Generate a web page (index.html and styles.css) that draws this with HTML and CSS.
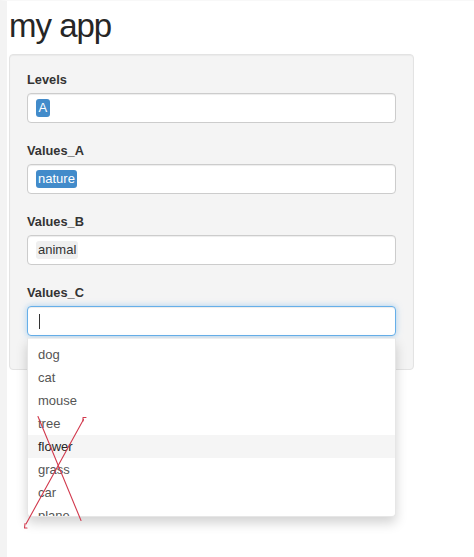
FILE: index.html
```html
<!DOCTYPE html>
<html>
<head>
<meta charset="utf-8">
<title>my app</title>
<link rel="stylesheet" href="styles.css">
</head>
<body>
<div class="page">
  <h1 class="title">my app</h1>
  <div class="well">
    <div class="group">
      <label class="label">Levels</label>
      <div class="control">
        <div class="input"><span class="pill pill-active pill-a">A</span></div>
      </div>
    </div>
    <div class="group">
      <label class="label">Values_A</label>
      <div class="control">
        <div class="input"><span class="pill pill-active">nature</span></div>
      </div>
    </div>
    <div class="group">
      <label class="label">Values_B</label>
      <div class="control">
        <div class="input"><span class="pill">animal</span></div>
      </div>
    </div>
    <div class="group">
      <label class="label">Values_C</label>
      <div class="control">
        <div class="input input-focus"><span class="caret"></span></div>
        <div class="dropdown">
          <div class="option">dog</div>
          <div class="option">cat</div>
          <div class="option">mouse</div>
          <div class="option">tree</div>
          <div class="option option-active">flower</div>
          <div class="option">grass</div>
          <div class="option">car</div>
          <div class="option">plane</div>
        </div>
      </div>
    </div>
  </div>
</div>
<svg class="marks" width="474" height="557" viewBox="0 0 474 557" xmlns="http://www.w3.org/2000/svg">
  <g fill="none" stroke="#d23a4e" stroke-width="1.1" stroke-linecap="round" stroke-linejoin="round">
    <path d="M38 416.5 L81 520.5"/>
    <path d="M83.5 419.5 L26 524"/>
    <path d="M83 421 L83 417.5 L86 417.5"/>
    <path d="M25 523.5 L24.5 528 L27 528"/>
  </g>
</svg>
</body>
</html>
```

FILE: styles.css
```css
html, body {
  margin: 0;
  padding: 0;
  background: #ffffff;
}

body {
  font-family: "Liberation Sans", Arial, sans-serif;
  font-size: 12.6px;
  color: #333333;
  position: relative;
  width: 474px;
  height: 557px;
  overflow: hidden;
}

.page {
  box-sizing: border-box;
  min-height: 557px;
  border-left: 7px solid #f3f3f3;
  border-top: 1px solid #f8f8f8;
  padding-left: 2px;
}

.title {
  margin: 7px 0 10px 0;
  font-size: 33px;
  line-height: 36px;
  font-weight: 400;
  letter-spacing: -1px;
  color: #262626;
}

.well {
  box-sizing: border-box;
  width: 405px;
  padding: 16px 17px 14px 17px;
  background: #f4f4f4;
  border: 1px solid #e3e3e3;
  border-radius: 4px;
  box-shadow: inset 0 1px 1px rgba(0, 0, 0, 0.04);
}

.group {
  margin-bottom: 19px;
}

.label {
  display: block;
  font-size: 12.8px;
  font-weight: 700;
  line-height: 18px;
  margin-bottom: 4px;
  color: #333333;
}

.control {
  position: relative;
}

.input {
  box-sizing: border-box;
  height: 30px;
  background: #ffffff;
  border: 1px solid #cccccc;
  border-radius: 4px;
  padding: 0 8px;
  display: flex;
  align-items: center;
  box-shadow: inset 0 1px 1px rgba(0, 0, 0, 0.075);
}

.input-focus {
  border-color: #66afe9;
  box-shadow: inset 0 1px 1px rgba(0, 0, 0, 0.075), 0 0 6px rgba(102, 175, 233, 0.55);
}

.pill {
  display: inline-block;
  height: 18px;
  line-height: 18px;
  padding: 0 2px;
  border-radius: 3px;
  background: #efefef;
  color: #333333;
  font-size: 13px;
}

.pill-active {
  background: #428bca;
  color: #ffffff;
}

.pill-a {
  padding: 0 2.5px;
}

.caret {
  display: inline-block;
  width: 1px;
  height: 15px;
  margin-left: 3px;
  background: #333333;
}

.dropdown {
  position: absolute;
  left: 0;
  right: 0;
  top: calc(100% + 2px);
  box-sizing: border-box;
  height: 179px;
  overflow: hidden;
  padding-top: 4px;
  background: #ffffff;
  border: 1px solid #e6e6e6;
  border-top-color: #eeeeee;
  border-radius: 0 0 4px 4px;
  box-shadow: 0 6px 12px rgba(0, 0, 0, 0.175);
  z-index: 2;
}

.option {
  height: 23px;
  line-height: 23px;
  padding: 0 10px;
  font-size: 13px;
  color: #555555;
}

.option-active {
  background: #f5f5f5;
  color: #262626;
}

.marks {
  position: absolute;
  left: 0;
  top: 0;
  pointer-events: none;
  z-index: 5;
}
```
